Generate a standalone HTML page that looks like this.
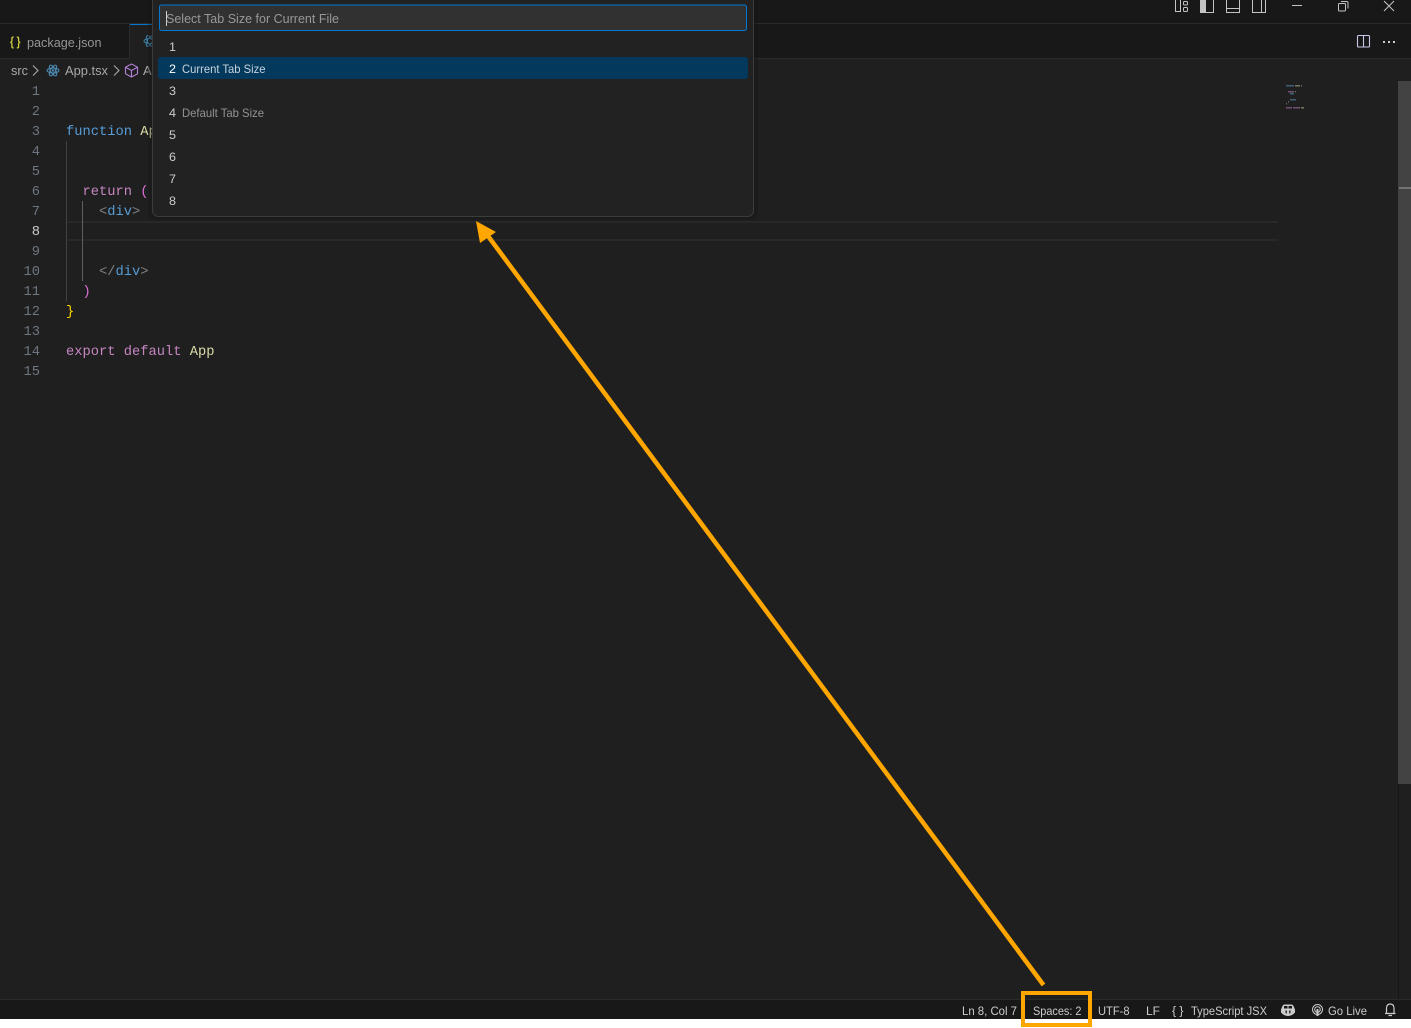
<!DOCTYPE html>
<html><head><meta charset="utf-8"><style>
html,body{margin:0;padding:0;background:#fff}
svg{display:block}
text{white-space:pre}
.u{font-family:"Liberation Sans",sans-serif;font-size:12px}
.c{font-family:"Liberation Mono",monospace;font-size:13.75px}
.n{text-anchor:end;fill:#6e7681}
</style></head><body>
<svg width="1411" height="1028" viewBox="0 0 1411 1028" xmlns="http://www.w3.org/2000/svg">
<rect width="1411" height="1028" fill="#fff"/>
<rect width="1411" height="1019" fill="#1f1f1f"/>
<!-- title bar -->
<rect width="1411" height="24" fill="#181818"/>
<rect y="23" width="1411" height="1" fill="#2b2b2b"/>
<g fill="none" stroke="#c4c4c4" stroke-width="1">
<path d="M1175.500 0V11.500H1180.500V0"/><rect x="1183.500" y="1.500" width="4" height="3.500" rx="1"/><rect x="1183.500" y="7.500" width="4" height="4" rx="1"/>
<path d="M1200.500 0V12.500H1213.500V0M1205.500 0V12.500"/>
<path d="M1226.500 0V12.500H1239.500V0M1226.500 8.500H1239.500"/>
<path d="M1252.500 0V12.500H1265.500V0M1261.500 0V12.500"/>
<path d="M1292 5.500H1302"/>
<rect x="1338.500" y="3.500" width="7" height="7.500" rx="1"/><path d="M1341 1.500H1346.500Q1348 1.500 1348 3V8.500"/>
<path d="M1384 1L1394 11M1394 1L1384 11"/>
</g>
<rect x="1201" y="0" width="4" height="12" fill="#c4c4c4"/>
<!-- tab bar -->
<rect y="24" width="1411" height="34" fill="#181818"/>
<rect y="58" width="1411" height="1" fill="#2b2b2b"/>
<rect x="129" y="24" width="1" height="34" fill="#2b2b2b"/>
<rect x="130" y="24" width="24" height="35" fill="#1f1f1f"/>
<rect x="130" y="24" width="24" height="1" fill="#0078d4"/>
<text x="10" y="46" class="u" style="font-size:13px;font-weight:bold" fill="#cbcb41" textLength="10.500" lengthAdjust="spacingAndGlyphs">{ }</text>
<text x="27" y="47" class="u" style="font-size:13px" fill="#969696" textLength="74.500" lengthAdjust="spacingAndGlyphs">package.json</text>
<g fill="none" stroke="#3f7fa8" stroke-width="1"><ellipse cx="150" cy="41" rx="6" ry="2.500"/><ellipse cx="150" cy="41" rx="6" ry="2.500" transform="rotate(60 150 41)"/><ellipse cx="150" cy="41" rx="6" ry="2.500" transform="rotate(120 150 41)"/></g>
<g fill="none" stroke-width="1.100">
<rect x="1357.500" y="35.500" width="12" height="11.500" rx="1" stroke="#c8c8e8"/><path d="M1363.500 35.500V47" stroke="#c8c8e8"/>
</g>
<g fill="#cccccc"><rect x="1383" y="41" width="2" height="2"/><rect x="1388" y="41" width="2" height="2"/><rect x="1393" y="41" width="2" height="2"/></g>
<!-- breadcrumbs -->
<g fill="#a9a9a9">
<text x="11" y="75" class="u" style="font-size:13px" textLength="17" lengthAdjust="spacingAndGlyphs">src</text>
<text x="65" y="75" class="u" style="font-size:13px" textLength="43" lengthAdjust="spacingAndGlyphs">App.tsx</text>
<text x="143" y="75" class="u" style="font-size:13px">App</text>
</g>
<g fill="none" stroke="#a9a9a9" stroke-width="1.100"><path d="M33 65.500L38 70.500L33 75.500"/><path d="M114 65.500L119 70.500L114 75.500"/></g>
<g fill="none" stroke="#4d8db5" stroke-width="1"><ellipse cx="53" cy="70.500" rx="6" ry="2.500"/><ellipse cx="53" cy="70.500" rx="6" ry="2.500" transform="rotate(60 53 70.500)"/><ellipse cx="53" cy="70.500" rx="6" ry="2.500" transform="rotate(120 53 70.500)"/></g>
<circle cx="53" cy="70.500" r="1.200" fill="#4d8db5"/>
<path d="M131.500 64L137.500 67.200V73.800L131.500 77L125.500 73.800V67.200ZM125.500 67.200L131.500 70.500L137.500 67.200M131.500 70.500V77" fill="none" stroke="#b180d7" stroke-width="1.100"/>
<!-- current line + guides -->
<rect x="66" y="221" width="1212" height="2" fill="#282828"/>
<rect x="66" y="239" width="1212" height="2" fill="#282828"/>
<rect x="66" y="141" width="1" height="160" fill="#404040"/>
<rect x="82" y="201" width="1" height="80" fill="#606060"/>
<!-- line numbers -->
<g class="c">
<text class="c n" x="40" y="95">1</text><text class="c n" x="40" y="115">2</text><text class="c n" x="40" y="135">3</text>
<text class="c n" x="40" y="155">4</text><text class="c n" x="40" y="175">5</text><text class="c n" x="40" y="195">6</text>
<text class="c n" x="40" y="215">7</text><text class="c n" x="40" y="235" style="fill:#cccccc">8</text><text class="c n" x="40" y="255">9</text>
<text class="c n" x="40" y="275">10</text><text class="c n" x="40" y="295">11</text><text class="c n" x="40" y="315">12</text>
<text class="c n" x="40" y="335">13</text><text class="c n" x="40" y="355">14</text><text class="c n" x="40" y="375">15</text>
</g>
<!-- code -->
<text class="c" x="66" y="135" fill="#569cd6">function</text><text class="c" x="140.250" y="135" fill="#dcdcaa">App</text>
<text class="c" x="82.500" y="195" fill="#c586c0">return</text><text class="c" x="140.250" y="195" fill="#da70d6">(</text>
<text class="c" x="99" y="215" fill="#808080">&lt;<tspan fill="#569cd6">div</tspan>&gt;</text>
<text class="c" x="99" y="275" fill="#808080">&lt;/<tspan fill="#569cd6">div</tspan>&gt;</text>
<text class="c" x="82.500" y="295" fill="#da70d6">)</text>
<text class="c" x="66" y="315" fill="#ffd700">}</text>
<text class="c" x="66" y="355" fill="#c586c0">export default <tspan fill="#dcdcaa">App</tspan></text>
<!-- minimap -->
<g>
<rect x="1286" y="85" width="8" height="1.500" fill="#3f5f75"/><rect x="1295" y="85" width="5" height="1.500" fill="#77775f"/><rect x="1301" y="85" width="1" height="1.500" fill="#666"/>
<rect x="1288" y="91" width="6" height="1.500" fill="#6f5070"/><rect x="1295" y="91" width="1" height="1.500" fill="#666"/>
<rect x="1290" y="93" width="4" height="1.500" fill="#3f5f75"/>
<rect x="1290" y="99" width="6" height="1.500" fill="#3f5f75"/><rect x="1288" y="101" width="1" height="1.500" fill="#666"/><rect x="1286" y="103" width="1" height="1.500" fill="#666"/>
<rect x="1286" y="107" width="6" height="1.500" fill="#6f5070"/><rect x="1293" y="107" width="7" height="1.500" fill="#6f5070"/><rect x="1301" y="107" width="3" height="1.500" fill="#77775f"/>
</g>
<!-- scrollbar -->
<rect x="1398" y="81" width="1" height="918" fill="#161616"/>
<rect x="1398" y="81" width="13" height="703" fill="#434343"/>
<rect x="1399" y="187" width="12" height="2" fill="#737373"/>
<!-- status bar -->
<rect y="999" width="1411" height="20" fill="#181818"/>
<rect y="999" width="1411" height="1" fill="#2b2b2b"/>
<g fill="#cccccc" class="u">
<text class="u" x="962" y="1015" textLength="55" lengthAdjust="spacingAndGlyphs">Ln 8, Col 7</text>
<text class="u" x="1033" y="1015" textLength="48.500" lengthAdjust="spacingAndGlyphs">Spaces: 2</text>
<text class="u" x="1098" y="1015" textLength="31.500" lengthAdjust="spacingAndGlyphs">UTF-8</text>
<text class="u" x="1146" y="1015">LF</text>
<text class="u" x="1172" y="1014.500" textLength="11.500" lengthAdjust="spacingAndGlyphs">{ }</text>
<text class="u" x="1191" y="1015" textLength="76" lengthAdjust="spacingAndGlyphs">TypeScript JSX</text>
<text class="u" x="1328" y="1015" textLength="39" lengthAdjust="spacingAndGlyphs">Go Live</text>
</g>
<!-- copilot -->
<path d="M1282.500 1006Q1283 1004.500 1285 1004.500H1291Q1293 1004.500 1293.500 1006L1295 1009.500V1012.500Q1292 1016 1288 1016Q1284 1016 1281 1012.500V1009.500Z" fill="#cccccc"/>
<rect x="1284" y="1006" width="3.500" height="2.500" fill="#181818"/><rect x="1288.500" y="1006" width="3.500" height="2.500" fill="#181818"/><rect x="1285.500" y="1010.500" width="1.300" height="2.800" fill="#181818"/><rect x="1289.200" y="1010.500" width="1.300" height="2.800" fill="#181818"/>
<!-- broadcast -->
<g fill="none" stroke="#cccccc" stroke-width="1"><circle cx="1317.500" cy="1009.500" r="5"/><circle cx="1317.500" cy="1009.500" r="2.800"/></g>
<rect x="1316.500" y="1009" width="2" height="7" fill="#cccccc"/>
<!-- bell -->
<path d="M1385 1013.500H1395.500M1386.500 1013.500V1008.500Q1386.500 1004 1390.200 1004Q1394 1004 1394 1008.500V1013.500M1388.500 1015.500H1392" fill="none" stroke="#cccccc" stroke-width="1.200"/>
<!-- quick input -->
<rect x="148" y="-4" width="610" height="224" rx="8" fill="#151515" opacity=".35"/>
<rect x="152.500" y="-6" width="601" height="222.500" rx="6" fill="#222222" stroke="#3c3c3c"/>
<rect x="159.500" y="5" width="587" height="25.500" rx="2" fill="#313131" stroke="#0078d4"/>
<rect x="166" y="11" width="1" height="15" fill="#cccccc"/>
<text class="u" x="166" y="23" style="font-size:13px" fill="#989898" textLength="173" lengthAdjust="spacingAndGlyphs">Select Tab Size for Current File</text>
<rect x="158" y="57" width="590" height="22" rx="3" fill="#04395e"/>
<g class="u" fill="#cccccc">
<text class="u" x="169" y="51" textLength="7" lengthAdjust="spacingAndGlyphs">1</text>
<text class="u" x="169" y="73" fill="#ffffff" textLength="7" lengthAdjust="spacingAndGlyphs">2</text>
<text class="u" x="169" y="95" textLength="7" lengthAdjust="spacingAndGlyphs">3</text>
<text class="u" x="169" y="117" textLength="7" lengthAdjust="spacingAndGlyphs">4</text>
<text class="u" x="169" y="139" textLength="7" lengthAdjust="spacingAndGlyphs">5</text>
<text class="u" x="169" y="161" textLength="7" lengthAdjust="spacingAndGlyphs">6</text>
<text class="u" x="169" y="183" textLength="7" lengthAdjust="spacingAndGlyphs">7</text>
<text class="u" x="169" y="205" textLength="7" lengthAdjust="spacingAndGlyphs">8</text>
</g>
<text class="u" x="182" y="73" fill="#c6d3dc" textLength="83.500" lengthAdjust="spacingAndGlyphs">Current Tab Size</text>
<text class="u" x="182" y="117" fill="#939393" textLength="82" lengthAdjust="spacingAndGlyphs">Default Tab Size</text>
<!-- annotation -->
<path d="M1043.500 985L488 236" fill="none" stroke="#ffa600" stroke-width="4.500"/>
<path d="M476 221L496 232L480 243Z" fill="#ffa600"/>
<rect x="1023" y="993" width="67" height="32" fill="none" stroke="#ffa600" stroke-width="4"/>
</svg>
</body></html>
